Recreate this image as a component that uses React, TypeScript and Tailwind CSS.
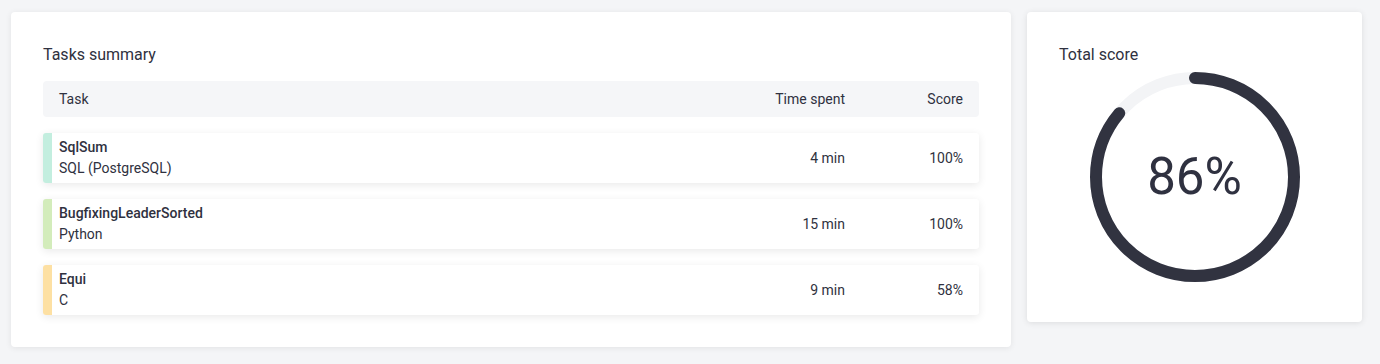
const tasks = [
  { name: "SqlSum", lang: "SQL (PostgreSQL)", time: "4 min", score: "100%", bar: "bg-[#c3eedf]" },
  { name: "BugfixingLeaderSorted", lang: "Python", time: "15 min", score: "100%", bar: "bg-[#d3ecbb]" },
  { name: "Equi", lang: "C", time: "9 min", score: "58%", bar: "bg-[#fde0a3]" },
];

function ScoreRing({ value }: { value: number }) {
  const r = 99;
  const c = 2 * Math.PI * r;
  return (
    <div className="relative w-[210px] h-[210px]">
      <svg width="210" height="210" viewBox="0 0 210 210" className="-rotate-90">
        <circle cx="105" cy="105" r={r} fill="none" stroke="#f3f4f6" strokeWidth={12} />
        <circle
          cx="105"
          cy="105"
          r={r}
          fill="none"
          stroke="#313340"
          strokeWidth={12}
          strokeLinecap="round"
          strokeDasharray={`${(c * value) / 100} ${c}`}
        />
      </svg>
      <div className="absolute inset-0 flex items-center justify-center text-[51px] text-[#2f3140]">
        {value}%
      </div>
    </div>
  );
}

export default function App() {
  return (
    <div className="min-h-[364px] bg-[#f4f5f7] pt-3 pl-[11px] flex items-start gap-4 font-['Roboto',sans-serif] text-[#2f3140]">
      <div className="w-[1000px] bg-white rounded shadow-[0_1px_6px_rgba(0,0,0,0.08)] px-8 pt-[33px] pb-8">
        <h3 className="text-[16px] leading-5">Tasks summary</h3>
        <div className="mt-4 h-9 bg-[#f5f6f8] rounded-sm flex items-center px-4 text-[14px]">
          <div className="flex-1">Task</div>
          <div className="w-[200px] text-right">Time spent</div>
          <div className="w-[118px] text-right">Score</div>
        </div>
        <div className="mt-4 flex flex-col gap-4">
          {tasks.map((t) => (
            <div
              key={t.name}
              className="h-[50px] flex bg-white rounded-[3px] overflow-hidden shadow-[0_2px_8px_rgba(0,0,0,0.09)] text-[14px]"
            >
              <div className={`w-[9px] ${t.bar}`} />
              <div className="flex-1 flex items-center pl-[7px] pr-4">
                <div className="flex-1 flex flex-col leading-[21px]">
                  <span className="font-medium">{t.name}</span>
                  <span>{t.lang}</span>
                </div>
                <div className="w-[200px] text-right">{t.time}</div>
                <div className="w-[118px] text-right">{t.score}</div>
              </div>
            </div>
          ))}
        </div>
      </div>
      <div className="w-[335px] h-[310px] bg-white rounded shadow-[0_1px_6px_rgba(0,0,0,0.1)] px-8 pt-[33px]">
        <h3 className="text-[16px] leading-5">Total score</h3>
        <div className="mt-[7px] flex justify-center">
          <ScoreRing value={86} />
        </div>
      </div>
    </div>
  );
}
